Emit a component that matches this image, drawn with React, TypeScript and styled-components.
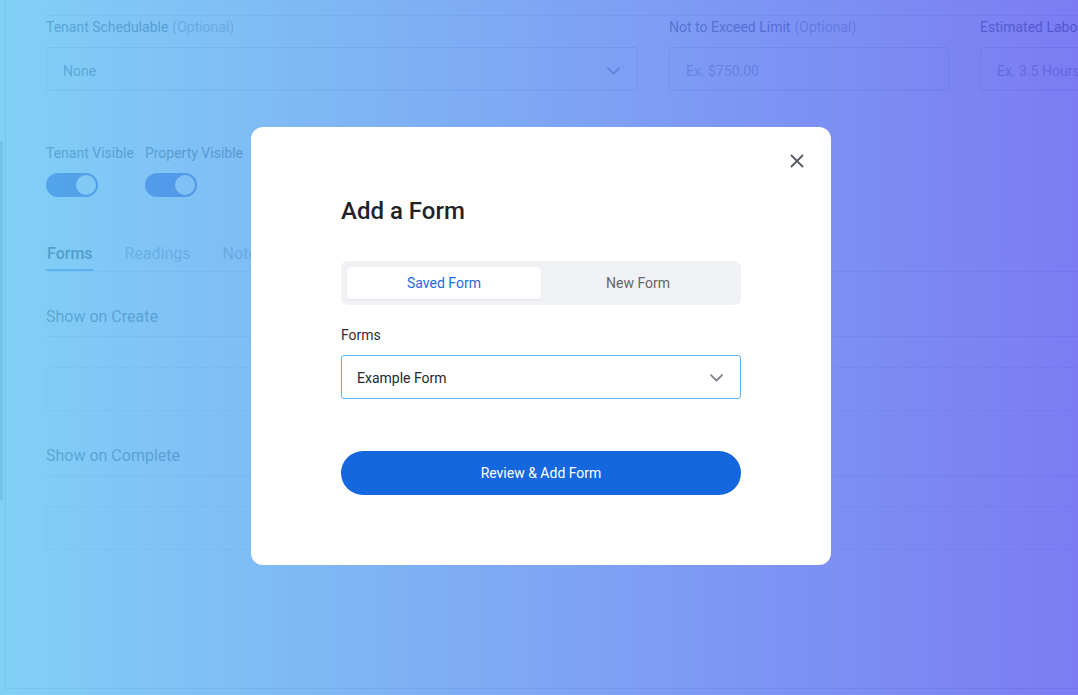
import React from "react";
import styled, { createGlobalStyle } from "styled-components";

const GlobalStyle = createGlobalStyle`
  html, body {
    margin: 0;
    padding: 0;
    overflow: hidden;
    background: #ffffff;
    font-family: Roboto, "Liberation Sans", Arial, sans-serif;
  }
  * { box-sizing: border-box; }
`;

const Page = styled.div`
  display: flex;
  width: 100vw;
  height: 100vh;
  overflow: hidden;
  background: #ffffff;
`;

const Rail = styled.div`
  flex: 0 0 5px;
  padding-top: 141px;
`;

const RailThumb = styled.div`
  width: 3px;
  height: 359px;
  background: #c4c9d0;
`;

const Main = styled.div`
  flex: 0 0 auto;
  width: 1400px;
  height: 689px;
  border-left: 1px solid #d3d7dd;
  border-bottom: 1px solid #d3d7dd;
  padding: 15px 0 0 40px;
`;

const Content = styled.div`
  border-top: 1px solid #e4e7eb;
  padding-top: 1px;
`;

const FieldsRow = styled.div`
  display: grid;
  grid-template-columns: 592px 280px 280px;
  column-gap: 31px;
`;

const Field = styled.div`
  display: flex;
  flex-direction: column;
  gap: 10px;
`;

const FieldLabel = styled.label`
  font-size: 14px;
  line-height: 20px;
  color: #5f6570;
`;

const Optional = styled.span`
  color: #a3a8b0;
  margin-left: 4px;
`;

const Input = styled.div<{ $placeholder?: boolean }>`
  height: 44px;
  border: 1px solid #d8dce2;
  border-radius: 3px;
  display: flex;
  align-items: center;
  justify-content: space-between;
  padding: 3px 17px 0 16px;
  font-size: 14px;
  color: ${(p) => (p.$placeholder ? "#a3a8b0" : "#6d727b")};
`;

const ToggleRow = styled.div`
  display: flex;
  gap: 11px;
  margin-top: 52px;
`;

const ToggleGroup = styled.div`
  display: flex;
  flex-direction: column;
  gap: 10px;
`;

const Toggle = styled.div`
  width: 52px;
  height: 24px;
  border-radius: 12px;
  background: #4a5bcf;
  display: flex;
  justify-content: flex-end;
  padding: 2px;
`;

const Knob = styled.div`
  width: 20px;
  height: 20px;
  border-radius: 50%;
  background: #ffffff;
`;

const TabBar = styled.div`
  display: flex;
  gap: 30px;
  margin-top: 47px;
  border-bottom: 1px solid #e4e7eb;
`;

const Tab = styled.div<{ $active?: boolean }>`
  font-size: 16px;
  line-height: 20px;
  font-weight: ${(p) => (p.$active ? 500 : 400)};
  color: ${(p) => (p.$active ? "#454b57" : "#a8acb4")};
  padding: 0 1px 5px 1px;
  border-bottom: 2px solid ${(p) => (p.$active ? "#7aa4ea" : "transparent")};
`;

const SectionTitle = styled.div`
  margin-top: 35px;
  font-size: 16px;
  line-height: 20px;
  color: #6a707b;
  padding-bottom: 9px;
  border-bottom: 1px solid #e4e7eb;
`;

const DropZone = styled.div`
  margin-top: 30px;
  height: 44px;
  border: 1px dashed #dadee4;
  border-radius: 4px;
`;

const Backdrop = styled.div`
  position: fixed;
  inset: 0;
  background: linear-gradient(to right, #56c0f2 0%, #4f50ee 100%);
  opacity: 0.75;
`;

const ModalLayer = styled.div`
  position: fixed;
  inset: 0;
  display: flex;
  align-items: center;
  justify-content: center;
  padding: 0 0 4px 4px;
`;

const Modal = styled.div`
  position: relative;
  width: 580px;
  height: 438px;
  background: #ffffff;
  border-radius: 12px;
  padding: 68px 90px 0;
`;

const CloseButton = styled.button`
  position: absolute;
  top: 25px;
  right: 25px;
  width: 18px;
  height: 18px;
  padding: 0;
  border: 0;
  background: none;
  display: flex;
  align-items: center;
  justify-content: center;
  color: #555a61;
`;

const Title = styled.h2`
  margin: 0;
  font-size: 24px;
  line-height: 32px;
  font-weight: 500;
  color: #1f2328;
`;

const Segmented = styled.div`
  margin-top: 34px;
  height: 44px;
  background: #f0f1f5;
  border-radius: 7px;
  padding: 6px;
  display: grid;
  grid-template-columns: 1fr 1fr;
`;

const Segment = styled.div<{ $active?: boolean }>`
  display: flex;
  align-items: center;
  justify-content: center;
  border-radius: 4px;
  font-size: 14px;
  background: ${(p) => (p.$active ? "#ffffff" : "transparent")};
  color: ${(p) => (p.$active ? "#1b6ce0" : "#62666d")};
  box-shadow: ${(p) => (p.$active ? "0 1px 2px rgba(0,0,0,0.06)" : "none")};
`;

const FormLabel = styled.div`
  margin-top: 20px;
  font-size: 14px;
  line-height: 20px;
  color: #2b2f35;
`;

const Select = styled.div`
  margin-top: 10px;
  height: 44px;
  border: 1px solid #59b6f6;
  border-radius: 3px;
  padding: 3px 17px 0 15px;
  display: flex;
  align-items: center;
  justify-content: space-between;
  font-size: 14px;
  color: #25292e;
`;

const PrimaryButton = styled.button`
  margin-top: 52px;
  width: 100%;
  height: 44px;
  border: 0;
  border-radius: 22px;
  background: #1467dd;
  color: #ffffff;
  font-family: Roboto, "Liberation Sans", Arial, sans-serif;
  font-size: 14px;
`;

function Chevron({ color }: { color: string }) {
  return (
    <svg width="13" height="8" viewBox="0 0 13 8" fill="none">
      <path d="M1 1.2l5.5 5.5 5.5-5.5" stroke={color} strokeWidth="1.8" strokeLinecap="round" strokeLinejoin="round" />
    </svg>
  );
}

export default function App() {
  return (
    <>
      <GlobalStyle />
      <Page>
        <Rail>
          <RailThumb />
        </Rail>
        <Main>
          <Content>
            <FieldsRow>
              <Field>
                <FieldLabel>
                  Tenant Schedulable<Optional>(Optional)</Optional>
                </FieldLabel>
                <Input>
                  None
                  <Chevron color="#8a8f97" />
                </Input>
              </Field>
              <Field>
                <FieldLabel>
                  Not to Exceed Limit<Optional>(Optional)</Optional>
                </FieldLabel>
                <Input $placeholder>Ex. $750.00</Input>
              </Field>
              <Field>
                <FieldLabel>Estimated Labor Hours</FieldLabel>
                <Input $placeholder>Ex. 3.5 Hours</Input>
              </Field>
            </FieldsRow>

            <ToggleRow>
              <ToggleGroup>
                <FieldLabel>Tenant Visible</FieldLabel>
                <Toggle>
                  <Knob />
                </Toggle>
              </ToggleGroup>
              <ToggleGroup>
                <FieldLabel>Property Visible</FieldLabel>
                <Toggle>
                  <Knob />
                </Toggle>
              </ToggleGroup>
            </ToggleRow>

            <TabBar>
              <Tab $active>Forms</Tab>
              <Tab>Readings</Tab>
              <Tab>Notes</Tab>
            </TabBar>

            <SectionTitle>Show on Create</SectionTitle>
            <DropZone />

            <SectionTitle>Show on Complete</SectionTitle>
            <DropZone />
          </Content>
        </Main>
      </Page>

      <Backdrop />
      <ModalLayer>
        <Modal>
          <CloseButton aria-label="Close">
            <svg width="14" height="14" viewBox="0 0 14 14" fill="none">
              <path d="M1.5 1.5l11 11M12.5 1.5l-11 11" stroke="currentColor" strokeWidth="1.8" strokeLinecap="round" />
            </svg>
          </CloseButton>
          <Title>Add a Form</Title>
          <Segmented>
            <Segment $active>Saved Form</Segment>
            <Segment>New Form</Segment>
          </Segmented>
          <FormLabel>Forms</FormLabel>
          <Select>
            Example Form
            <Chevron color="#7d8188" />
          </Select>
          <PrimaryButton>Review &amp; Add Form</PrimaryButton>
        </Modal>
      </ModalLayer>
    </>
  );
}
